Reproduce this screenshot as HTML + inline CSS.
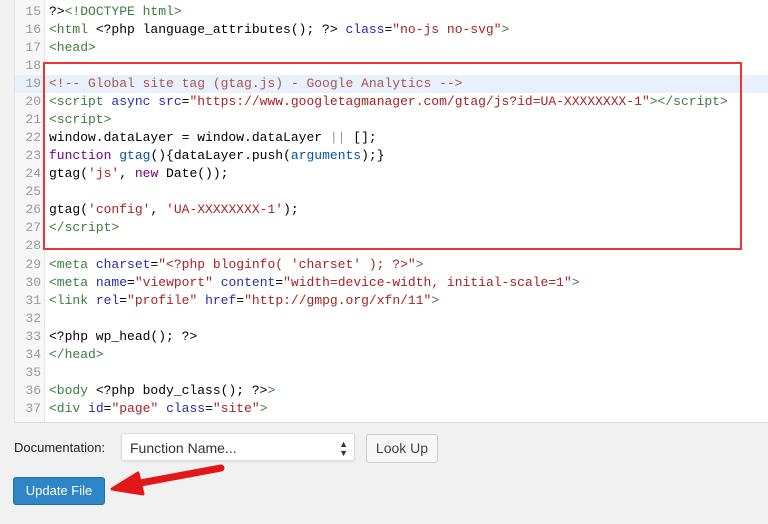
<!DOCTYPE html>
<html><head><style>
body{margin:0;width:768px;height:524px;background:#f1f1f1;position:relative;overflow:hidden;font-family:"Liberation Sans",sans-serif}
#ed{position:absolute;left:14px;top:0;width:760px;height:422px;background:#fff;border-bottom:1px solid #ddd;border-left:1px solid #e2e2e2}
#gut{position:absolute;left:0;top:0;width:29px;height:422px;background:#f7f7f7;border-right:1px solid #e4e4e4}
.l{position:absolute;left:0;height:18px;width:760px;font:13px/18px "Liberation Mono",monospace;white-space:pre;color:#000}
.n{display:inline-block;width:26px;text-align:right;color:#999;margin-right:8px}
.hl{background:#e8f0fb}
.t{color:#3b7d3b}.a{color:#2a2ab0}.s{color:#a22}.c{color:#a55}.k{color:#708}.v{color:#05a}
#box{position:absolute;left:43px;top:62px;width:695px;height:184px;border:2px solid #e33}
#doc{position:absolute;left:14px;top:440px;font-size:13px;color:#222}
#sel{position:absolute;left:121px;top:433px;width:234px;height:28px;border:1px solid #ddd;border-radius:3px;background:#fff;box-shadow:0 1px 2px rgba(0,0,0,.08);font-size:14px;color:#333;line-height:28px;padding-left:8px;box-sizing:border-box}
#sel span{position:absolute;right:6px;top:0;font-size:9px;line-height:9px;top:6px}
#lk{position:absolute;left:366px;top:434px;width:70px;height:27px;border:1px solid #ccc;border-radius:3px;background:#f7f7f7;font-size:14px;color:#444;line-height:27px;text-align:center}
#up{position:absolute;left:13px;top:477px;width:92px;height:28px;background:#2f86c6;border:1px solid #1f6ea8;border-radius:3px;box-sizing:border-box;color:#fff;font-size:13px;line-height:26px;text-align:center}
</style></head><body>
<div id="ed"><div id="gut"></div>
<div class="l" style="top:3px"><span class="n">15</span>?&gt;<span class="t">&lt;!DOCTYPE html&gt;</span></div>
<div class="l" style="top:21px"><span class="n">16</span><span class="t">&lt;html</span> &lt;?php language_attributes(); ?&gt; <span class="a">class</span>=<span class="s">"no-js no-svg"</span><span class="t">&gt;</span></div>
<div class="l" style="top:39px"><span class="n">17</span><span class="t">&lt;head&gt;</span></div>
<div class="l" style="top:57px"><span class="n">18</span></div>
<div class="l hl" style="top:75px"><span class="n">19</span><span class="c">&lt;!-- Global site tag (gtag.js) - Google Analytics --&gt;</span></div>
<div class="l" style="top:93px"><span class="n">20</span><span class="t">&lt;script</span> <span class="a">async</span> <span class="a">src</span>=<span class="s">"https://www.googletagmanager.com/gtag/js?id=UA-XXXXXXXX-1"</span><span class="t">&gt;&lt;/script&gt;</span></div>
<div class="l" style="top:111px"><span class="n">21</span><span class="t">&lt;script&gt;</span></div>
<div class="l" style="top:129px"><span class="n">22</span>window.dataLayer = window.dataLayer <span style="color:#999">||</span> [];</div>
<div class="l" style="top:147px"><span class="n">23</span><span class="k">function</span> <span class="v">gtag</span>(){dataLayer.push(<span class="v">arguments</span>);}</div>
<div class="l" style="top:165px"><span class="n">24</span>gtag(<span class="s">'js'</span>, <span class="k">new</span> Date());</div>
<div class="l" style="top:183px"><span class="n">25</span></div>
<div class="l" style="top:201px"><span class="n">26</span>gtag(<span class="s">'config'</span>, <span class="s">'UA-XXXXXXXX-1'</span>);</div>
<div class="l" style="top:219px"><span class="n">27</span><span class="t">&lt;/script&gt;</span></div>
<div class="l" style="top:237px"><span class="n">28</span></div>
<div class="l" style="top:256px"><span class="n">29</span><span class="t">&lt;meta</span> <span class="a">charset</span>=<span class="s">"&lt;?php bloginfo( 'charset' ); ?&gt;"</span><span class="t">&gt;</span></div>
<div class="l" style="top:274px"><span class="n">30</span><span class="t">&lt;meta</span> <span class="a">name</span>=<span class="s">"viewport"</span> <span class="a">content</span>=<span class="s">"width=device-width, initial-scale=1"</span><span class="t">&gt;</span></div>
<div class="l" style="top:292px"><span class="n">31</span><span class="t">&lt;link</span> <span class="a">rel</span>=<span class="s">"profile"</span> <span class="a">href</span>=<span class="s">"http://gmpg.org/xfn/11"</span><span class="t">&gt;</span></div>
<div class="l" style="top:310px"><span class="n">32</span></div>
<div class="l" style="top:328px"><span class="n">33</span>&lt;?php wp_head(); ?&gt;</div>
<div class="l" style="top:346px"><span class="n">34</span><span class="t">&lt;/head&gt;</span></div>
<div class="l" style="top:364px"><span class="n">35</span></div>
<div class="l" style="top:382px"><span class="n">36</span><span class="t">&lt;body</span> &lt;?php body_class(); ?&gt;<span class="t">&gt;</span></div>
<div class="l" style="top:400px"><span class="n">37</span><span class="t">&lt;div</span> <span class="a">id</span>=<span class="s">"page"</span> <span class="a">class</span>=<span class="s">"site"</span><span class="t">&gt;</span></div>
</div>
<div id="box"></div>
<div id="doc">Documentation:</div>
<div id="sel">Function Name...<span>▲<br>▼</span></div>
<div id="lk">Look Up</div>
<div id="up">Update File</div>
<svg style="position:absolute;left:0;top:0" width="768" height="524"><path d="M221 468 L135 484" stroke="#e3161a" stroke-width="7" stroke-linecap="round"/><path d="M112 489 L138 473 L143 494 Z" fill="#e3161a" stroke="#e3161a" stroke-width="3" stroke-linejoin="round"/></svg>
</body></html>
